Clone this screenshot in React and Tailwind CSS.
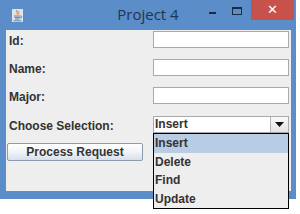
import React from "react";

function JavaIcon() {
  return (
    <svg width="11" height="13" viewBox="0 0 11 13">
      <rect x="0" y="0" width="11" height="13" fill="#dfe3e8" />
      <path d="M5 1 C3.5 2.5 6.5 3.5 5 5.5" stroke="#e0762a" strokeWidth="1" fill="none" />
      <path d="M7 2 C6 3 7.5 4 6.5 5.5" stroke="#e0762a" strokeWidth="0.8" fill="none" />
      <path d="M2 7 H8.5 M2.5 8.5 H8 M3 10 H7.5" stroke="#5a7ca8" strokeWidth="0.9" fill="none" />
      <path d="M8.5 7 C10.5 7 10.5 9 8 9" stroke="#5a7ca8" strokeWidth="0.8" fill="none" />
      <path d="M1.5 11.8 H9.5" stroke="#5a7ca8" strokeWidth="0.9" />
    </svg>
  );
}

function Field() {
  return <div className="w-[136px] h-[17px] bg-white border border-[#a9a9a9]" />;
}

export default function App() {
  const label = "w-[144px] h-[17px] pt-[2px] leading-[17px] text-[12px] font-bold text-[#333333]";
  return (
    <div className="w-[300px] h-[214px] bg-white relative overflow-hidden font-['Liberation_Sans',Arial,sans-serif]">
      <div className="w-[296px] h-[199px] bg-[#5b8dc8] flex flex-col">
        {/* Title bar */}
        <div className="h-[30px] flex items-start shrink-0">
          <div className="w-[96px] h-[30px] pl-[12px] pt-[9px]">
            <JavaIcon />
          </div>
          <div className="flex-1 text-center pt-[3px] text-[15px] leading-[22px] text-[#22344f] font-['Open_Sans',sans-serif]">
            Project 4
          </div>
          <div className="w-[96px] h-[30px] flex items-start pl-[1px]">
            <div className="w-[22px] h-[20px] flex items-center justify-center">
              <div className="w-[7px] h-[2px] bg-[#1b2a40] mt-[6px]" />
            </div>
            <div className="w-[28px] h-[20px] flex justify-center pt-[7px]">
              <div className="w-[10px] h-[8px] border border-[#1b2a40] border-t-2" />
            </div>
            <div className="w-[43px] h-[20px] bg-[#c7514b] flex items-center justify-center text-white text-[13px] font-bold font-['DejaVu_Sans',sans-serif]">
              ✕
            </div>
          </div>
        </div>
        {/* Content */}
        <div className="flex-1 ml-[6px] mr-[5px] mb-[8px] bg-[#eeeeee] flex flex-col pt-[1px]">
          <div className="flex pl-[3px]">
            <div className={label}>Id:</div>
            <Field />
          </div>
          <div className="flex pl-[3px] mt-[11px]">
            <div className={label}>Name:</div>
            <Field />
          </div>
          <div className="flex pl-[3px] mt-[11px]">
            <div className={label}>Major:</div>
            <Field />
          </div>
          <div className="flex pl-[3px] mt-[12px]">
            <div className={label}>Choose Selection:</div>
            <div className="w-[136px] h-[17px] bg-white border border-[#a9a9a9] flex">
              <div className="flex-1 pl-[1px] text-[12px] font-bold leading-[15px] text-[#333333]">Insert</div>
              <div className="w-[18px] h-[15px] border-l border-[#b5b5b5] bg-gradient-to-b from-[#fafafa] to-[#e3e3e3] flex items-center justify-center">
                <svg width="9" height="5" viewBox="0 0 9 5">
                  <path d="M0 0 H9 L4.5 5 Z" fill="#111" />
                </svg>
              </div>
            </div>
          </div>
          <div className="flex mt-[10px] pl-[1px]">
            <div className="w-[136px] h-[18px] rounded-[2px] border border-[#8c9bb0] bg-gradient-to-b from-[#ffffff] via-[#f1f4f8] to-[#d6e0eb] flex items-center justify-center text-[12px] font-bold text-[#333333] leading-[16px]">
              Process Request
            </div>
          </div>
        </div>
      </div>
      {/* Dropdown popup */}
      <div className="absolute left-[153px] top-[133px] w-[136px] h-[76px] border border-black bg-[#eeeeee] flex flex-col text-[12px] font-bold text-[#333333]">
        <div className="h-[19px] leading-[19px] pl-[1px] bg-[#b8cde3]">Insert</div>
        <div className="h-[18px] leading-[18px] pl-[1px]">Delete</div>
        <div className="h-[19px] leading-[19px] pl-[1px]">Find</div>
        <div className="h-[18px] leading-[18px] pl-[1px]">Update</div>
      </div>
    </div>
  );
}
